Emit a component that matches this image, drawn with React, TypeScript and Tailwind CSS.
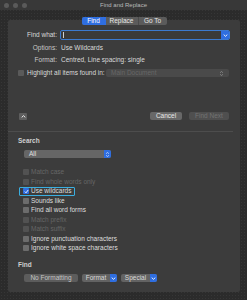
import React from 'react';

const font = { fontFamily: '"Liberation Sans", Arial, sans-serif' };

const Chevron = ({ up = false }: { up?: boolean }) => (
  <svg width="5" height="3" viewBox="0 0 5 3" className={up ? 'rotate-180' : ''}>
    <path d="M0.7 0.6 L2.5 2.3 L4.3 0.6" stroke="white" strokeWidth="0.9" fill="none" />
  </svg>
);

const Stepper = () => (
  <div className="flex flex-col items-center gap-[1px]">
    <Chevron up />
    <Chevron />
  </div>
);

interface Opt {
  label: string;
  disabled?: boolean;
  checked?: boolean;
}

const searchOptions: Opt[] = [
  { label: 'Match case', disabled: true },
  { label: 'Find whole words only', disabled: true },
  { label: 'Use wildcards', checked: true },
  { label: 'Sounds like' },
  { label: 'Find all word forms' },
  { label: 'Match prefix', disabled: true },
  { label: 'Match suffix', disabled: true },
  { label: 'Ignore punctuation characters' },
  { label: 'Ignore white space characters' },
];

const Checkbox = ({ checked, disabled }: { checked?: boolean; disabled?: boolean }) => {
  if (checked) {
    return (
      <div className="w-[6px] h-[6px] rounded-[1px] bg-[#2f6ee0] flex items-center justify-center">
        <svg width="5" height="5" viewBox="0 0 5 5">
          <path d="M0.8 2.6 L2 3.8 L4.2 1" stroke="white" strokeWidth="0.9" fill="none" />
        </svg>
      </div>
    );
  }
  return (
    <div
      className={`w-[6px] h-[6px] rounded-[1px] ${disabled ? 'bg-[#525252]' : 'bg-[#6c6c6c]'}`}
    />
  );
};

export default function App() {
  return (
    <div
      className="w-[247px] h-[300px] overflow-hidden bg-[#2b2b2b] bg-[radial-gradient(#363636_0.6px,transparent_0.8px)] bg-[length:3px_3px] text-[6.5px] leading-none text-[#dadada] flex flex-col"
      style={font}
    >
      {/* title bar */}
      <div className="relative h-[10px] bg-[#383838] flex items-center px-[4px] gap-[4px] shrink-0">
        <div className="w-[5px] h-[5px] rounded-full bg-[#5a5a5a]" />
        <div className="w-[5px] h-[5px] rounded-full bg-[#5a5a5a]" />
        <div className="w-[5px] h-[5px] rounded-full bg-[#5a5a5a]" />
        <div className="absolute inset-0 flex items-center justify-center text-[6px] text-[#b8b8b8]">
          Find and Replace
        </div>
      </div>

      <div className="px-[8px] pt-[10px]">
        <div className="w-[232px] h-[272px] bg-[#3c3c3c] rounded-[2px] flex flex-col">
          {/* tabs */}
          <div className="-mt-[3px] flex justify-center">
            <div className="flex h-[8px] rounded-[2px] bg-[#5b5b5b] overflow-hidden text-[#e8e8e8]">
              <div className="w-[24px] bg-[#2f6ee0] text-white flex items-center justify-center">Find</div>
              <div className="w-[33px] flex items-center justify-center border-r border-[#4a4a4a]">Replace</div>
              <div className="w-[28px] flex items-center justify-center">Go To</div>
            </div>
          </div>

          {/* find what */}
          <div className="mt-[5px] h-[10px] flex items-center">
            <div className="w-[49px] text-right">Find what:</div>
            <div className="ml-[3px] w-[170px] h-[10px] rounded-[2px] border-[1.5px] border-[#3b7ad0] bg-[#3a3a3a] flex items-center">
              <div className="ml-[2px] w-px h-[6px] bg-[#cfcfcf]" />
              <div className="ml-auto w-[8px] h-full rounded-r-[1px] bg-[#2f6ee0] flex items-center justify-center">
                <Chevron />
              </div>
            </div>
          </div>

          <div className="mt-[4px] h-[8px] flex items-center">
            <div className="w-[49px] text-right text-[#c8c8c8]">Options:</div>
            <div className="ml-[4px]">Use Wildcards</div>
          </div>
          <div className="mt-[4px] h-[8px] flex items-center">
            <div className="w-[49px] text-right text-[#c8c8c8]">Format:</div>
            <div className="ml-[4px]">Centred, Line spacing: single</div>
          </div>

          {/* highlight */}
          <div className="mt-[5px] h-[8px] flex items-center pl-[10px]">
            <div className="w-[6px] h-[6px] rounded-[1px] bg-[#5a5a5a]" />
            <div className="ml-[3px]">Highlight all items found in:</div>
            <div className="ml-auto mr-[11px] w-[123px] h-[8px] rounded-[2px] bg-[#4a4a4a] flex items-center px-[5px] text-[#686868]">
              Main Document
              <div className="ml-auto scale-75 opacity-50">
                <Stepper />
              </div>
            </div>
          </div>

          {/* action buttons */}
          <div className="mt-[35px] h-[8px] flex items-center pl-[11px] pr-[11px]">
            <div className="w-[8px] h-[7px] rounded-[1px] bg-[#5e5e5e] flex items-center justify-center">
              <Chevron up />
            </div>
            <div className="ml-auto w-[32px] h-[8px] rounded-[2px] bg-[#686868] flex items-center justify-center text-[#e8e8e8]">
              Cancel
            </div>
            <div className="ml-[7px] w-[40px] h-[8px] rounded-[2px] bg-[#4f4f4f] flex items-center justify-center text-[#737373]">
              Find Next
            </div>
          </div>

          <div className="mt-[11px] h-px w-[225px] bg-[#4d4d4d]" />

          {/* search */}
          <div className="mt-[5px] h-[8px] flex items-center pl-[10px] font-bold text-[#cfcfcf]">Search</div>
          <div className="mt-[5px] pl-[16px]">
            <div className="w-[87px] h-[8px] rounded-[2px] bg-[#666666] flex items-center pl-[5px] text-[#e0e0e0]">
              All
              <div className="ml-auto w-[7px] h-full rounded-r-[2px] bg-[#2f6ee0] flex items-center justify-center">
                <div className="scale-75">
                  <Stepper />
                </div>
              </div>
            </div>
          </div>

          <div className="mt-[9.5px] flex flex-col">
            {searchOptions.map((o) => (
              <div key={o.label} className="h-[9.5px] flex items-center pl-[12px]">
                <div
                  className={`flex items-center h-[9px] pl-[3px] pr-[3px] ${
                    o.checked ? 'border border-[#3aaee0] rounded-[1px] -ml-px' : ''
                  }`}
                >
                  <Checkbox checked={o.checked} disabled={o.disabled} />
                  <div className={`ml-[2px] ${o.disabled ? 'text-[#666666]' : 'text-[#dedede]'}`}>
                    {o.label}
                  </div>
                </div>
              </div>
            ))}
          </div>

          {/* find formatting */}
          <div className="mt-[8px] h-[8px] flex items-center pl-[10px] font-bold text-[#cfcfcf]">Find</div>
          <div className="mt-[5px] h-[8px] flex items-center pl-[16px] gap-[4px]">
            <div className="w-[54px] h-[8px] rounded-[2px] bg-[#5c5c5c] flex items-center justify-center text-[#c4c4c4]">
              No Formatting
            </div>
            <div className="w-[35px] h-[8px] rounded-[2px] bg-[#636363] flex items-center text-[#d8d8d8]">
              <div className="flex-1 text-center">Format</div>
              <div className="w-[7px] h-full rounded-r-[2px] bg-[#2f6ee0] flex items-center justify-center">
                <Chevron />
              </div>
            </div>
            <div className="w-[36px] h-[8px] rounded-[2px] bg-[#636363] flex items-center text-[#d8d8d8]">
              <div className="flex-1 text-center">Special</div>
              <div className="w-[7px] h-full rounded-r-[2px] bg-[#2f6ee0] flex items-center justify-center">
                <Chevron />
              </div>
            </div>
          </div>
        </div>
      </div>
    </div>
  );
}
